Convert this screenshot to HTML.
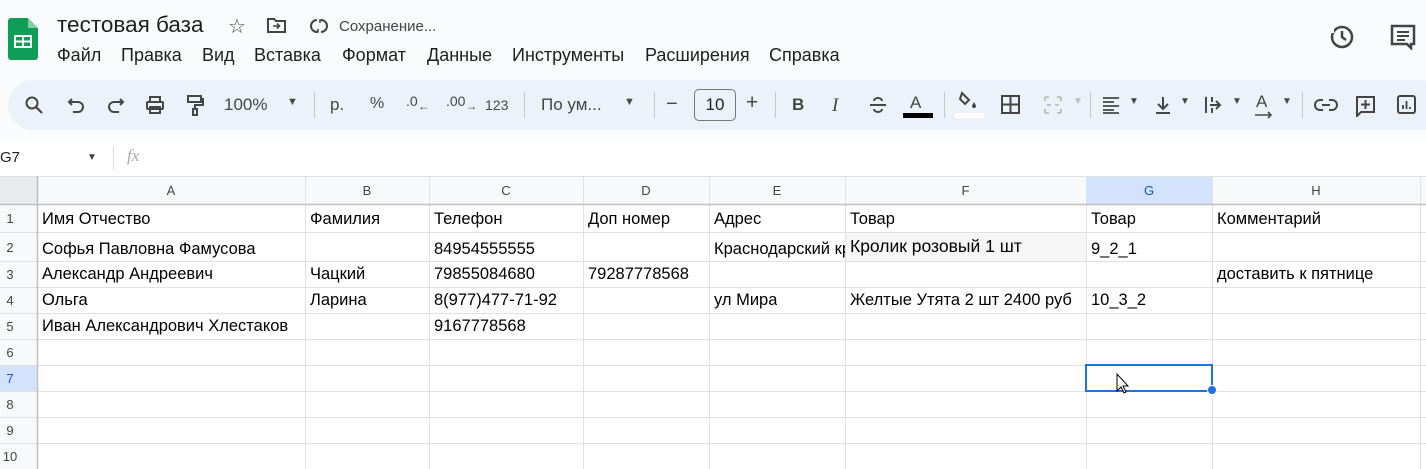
<!DOCTYPE html><html><head><meta charset="utf-8"><style>
body{margin:0;width:1426px;height:469px;overflow:hidden;background:#f9fbfd;font-family:"Liberation Sans",Arial,sans-serif;position:relative;color:#1f1f1f}
.a{position:absolute;white-space:nowrap}
.m{font-size:18px;top:45px;color:#1f1f1f}
.tb{position:absolute;left:8px;top:80px;width:1440px;height:50px;background:#edf2fa;border-radius:25px}
.ic{position:absolute;top:93px;color:#444746;font-size:17px}
.sep{position:absolute;top:92px;width:1px;height:26px;background:#c7c7c7}
.grid{position:absolute;left:0;top:176px;width:1426px;height:293px;background:#fff}
.c{position:absolute;font-size:16.5px;color:#000;white-space:nowrap;overflow:hidden}
.h{position:absolute;font-size:13px;color:#444;text-align:center}
svg.i path,svg.i rect,svg.i circle{fill:none;stroke:#444746;stroke-width:2}
</style></head><body>
<svg class="a" style="left:8px;top:18px" width="30" height="42" viewBox="0 0 30 42"><path d="M3 0h17l10 10v29a3 3 0 0 1-3 3H3a3 3 0 0 1-3-3V3a3 3 0 0 1 3-3z" fill="#0f9d58"/><path d="M20 0v10h10z" fill="#87ce9f"/><rect x="6" y="17" width="18" height="13" fill="#fff"/><rect x="8" y="19" width="6" height="3.5" fill="#0f9d58"/><rect x="16" y="19" width="6" height="3.5" fill="#0f9d58"/><rect x="8" y="24.5" width="6" height="3.5" fill="#0f9d58"/><rect x="16" y="24.5" width="6" height="3.5" fill="#0f9d58"/></svg>
<div class="a" style="left:57px;top:12px;font-size:22.5px">тестовая база</div>
<div class="a" style="left:228px;top:14px;font-size:20px;color:#444">☆</div>
<svg class="a" style="left:267px;top:17px" width="20" height="16"><path d="M1 2h6l2 2h9v11H1z" fill="none" stroke="#444" stroke-width="2"/><path d="M6 9h6m-2-2.5L12.5 9 10 11.5" stroke="#444" stroke-width="1.6" fill="none"/></svg>
<svg class="a" style="left:310px;top:17px" width="18" height="18"><path d="M7 3a6 6 0 0 0 0 12M11 3a6 6 0 0 1 0 12" fill="none" stroke="#444" stroke-width="2"/><path d="M5 15h3v-3M13 3h-3v3" fill="none" stroke="#444" stroke-width="1.6"/></svg>
<div class="a" style="left:339px;top:18px;font-size:15px;color:#444">Сохранение...</div>
<div class="a m" style="left:57px">Файл</div><div class="a m" style="left:121px">Правка</div><div class="a m" style="left:202px">Вид</div><div class="a m" style="left:254px">Вставка</div><div class="a m" style="left:342px">Формат</div><div class="a m" style="left:427px">Данные</div><div class="a m" style="left:512px">Инструменты</div><div class="a m" style="left:645px">Расширения</div><div class="a m" style="left:769px">Справка</div>
<svg class="a" style="left:1328px;top:24px" width="28" height="26"><circle cx="14" cy="13" r="10" fill="none" stroke="#444" stroke-width="2.5"/><path d="M14 7v6l4 3" stroke="#444" stroke-width="2.5" fill="none"/><rect x="0" y="2" width="6" height="7" fill="#f9fbfd"/></svg>
<svg class="a" style="left:1390px;top:24px" width="28" height="26"><path d="M2 2h22v18h-3v4l-4-4H2z" fill="none" stroke="#444" stroke-width="2.5"/><path d="M7 8h12M7 12h12M7 16h8" stroke="#444" stroke-width="2"/></svg>
<div class="tb"></div>
<svg class="a" style="left:24px;top:95px" width="20" height="20"><circle cx="8" cy="8" r="5.5" fill="none" stroke="#444" stroke-width="2"/><path d="M12 12l6 6" stroke="#444" stroke-width="2.2"/></svg>
<svg class="a i" style="left:67px;top:96px" width="20" height="20"><path d="M5 3L2 6l3 3M2 6h9a5 5 0 0 1 0 10H6"/></svg>
<svg class="a i" style="left:106px;top:96px" width="20" height="20"><path d="M14 3l3 3-3 3M17 6H8a5 5 0 0 0 0 10h5"/></svg>
<svg class="a i" style="left:145px;top:95px" width="20" height="20"><rect x="5" y="2" width="10" height="5"/><rect x="2" y="7" width="16" height="7" rx="1"/><rect x="5" y="12" width="10" height="6"/></svg>
<svg class="a i" style="left:186px;top:94px" width="18" height="22"><rect x="2" y="2" width="13" height="6"/><path d="M15 5h2v6H9v4"/><rect x="7" y="15" width="4" height="6"/></svg>
<div class="ic" style="left:224px;top:95px">100%</div><div class="ic" style="left:287px;top:96px;font-size:11px">▼</div>
<div class="sep" style="left:314px"></div>
<div class="ic" style="left:330px;top:95px">р.</div><div class="ic" style="left:370px;top:95px;font-size:16px">%</div><div class="ic" style="left:406px;top:93px;font-size:14px">.0<sub>←</sub></div><div class="ic" style="left:446px;top:93px;font-size:14px">.00<sub>→</sub></div><div class="ic" style="left:485px;top:97px;font-size:14px">123</div>
<div class="sep" style="left:524px"></div>
<div class="ic" style="left:541px;top:95px">По ум...</div><div class="ic" style="left:624px;top:96px;font-size:11px">▼</div>
<div class="sep" style="left:654px"></div>
<div class="ic" style="left:666px;top:93px;font-size:20px">−</div>
<div class="a" style="left:694px;top:89px;width:40px;height:30px;border:1px solid #747775;border-radius:5px;text-align:center;line-height:30px;font-size:17px;color:#1f1f1f">10</div>
<div class="ic" style="left:746px;top:91px;font-size:21px">+</div>
<div class="sep" style="left:775px"></div>
<div class="ic" style="left:792px;top:95px;font-weight:bold">B</div><div class="ic" style="left:832px;top:95px;font-style:italic;font-family:'Liberation Serif';font-size:19px">I</div>
<svg class="a i" style="left:868px;top:95px" width="20" height="20"><path d="M2 10h16M6 6a4 3 0 0 1 8 0M6 14a4 3 0 0 0 8 0"/></svg>
<div class="ic" style="left:910px;top:93px">A</div><div class="a" style="left:903px;top:113px;width:30px;height:5px;background:#000"></div>
<div class="sep" style="left:944px"></div>
<svg class="a" style="left:958px;top:91px" width="24" height="20"><path d="M4 2l7 7-4 4-5-5z" fill="none" stroke="#444" stroke-width="2"/><path d="M16 11c1 2 2 3 2 4a2 2 0 0 1-4 0c0-1 1-2 2-4z" fill="#444"/></svg><div class="a" style="left:955px;top:113px;width:29px;height:5px;background:#fff"></div>
<svg class="a" style="left:1001px;top:95px" width="20" height="20"><rect x="1" y="1" width="17" height="17" fill="none" stroke="#444" stroke-width="2"/><path d="M9.5 1v17M1 9.5h17" stroke="#444" stroke-width="2"/></svg>
<svg class="a" style="left:1043px;top:95px" width="20" height="20"><path d="M2 2h4M2 2v4M18 2h-4M18 2v4M2 18h4M2 18v-4M18 18h-4M18 18v-4M4 10h4M16 10h-4" fill="none" stroke="#bbb" stroke-width="1.8"/></svg><div class="ic" style="left:1073px;top:96px;font-size:10px;color:#bbb">▼</div>
<div class="sep" style="left:1090px"></div>
<svg class="a i" style="left:1101px;top:95px" width="20" height="20"><path d="M2 3h16M2 7h11M2 11h16M2 15h11M2 18h16" style="stroke-width:1.7"/></svg><div class="ic" style="left:1129px;top:96px;font-size:10px">▼</div>
<svg class="a i" style="left:1153px;top:95px" width="20" height="20"><path d="M10 2v12M5 9l5 5 5-5M3 18h14"/></svg><div class="ic" style="left:1180px;top:96px;font-size:10px">▼</div>
<svg class="a i" style="left:1204px;top:95px" width="20" height="20"><path d="M2 2v16M6 10h10M12 6l4 4-4 4M8 2v5M8 13v5"/></svg><div class="ic" style="left:1232px;top:96px;font-size:10px">▼</div>
<div class="ic" style="left:1256px;top:92px">A</div><svg class="a i" style="left:1254px;top:111px" width="20" height="8"><path d="M1 4h16M14 1l3 3-3 3" style="stroke-width:1.6"/></svg><div class="ic" style="left:1282px;top:96px;font-size:10px">▼</div>
<div class="sep" style="left:1302px"></div>
<svg class="a i" style="left:1314px;top:97px" width="24" height="16"><path d="M9 3H6a5 5 0 0 0 0 10h3M15 3h3a5 5 0 0 1 0 10h-3M8 8h8"/></svg>
<svg class="a" style="left:1355px;top:95px" width="22" height="22"><path d="M2 2h17v15H6l-4 4z" fill="none" stroke="#444" stroke-width="2"/><path d="M10.5 5v9M6 9.5h9" stroke="#444" stroke-width="2"/></svg>
<svg class="a" style="left:1397px;top:95px" width="20" height="20"><rect x="1" y="1" width="17" height="17" rx="2" fill="none" stroke="#444" stroke-width="2"/><path d="M6 14v-4M9.5 14V6M13 14v-2" stroke="#444" stroke-width="1.8"/></svg>
<div class="a" style="left:0;top:140px;width:1426px;height:36px;background:#fff"></div>
<div class="a" style="left:0;top:149px;font-size:15px">G7</div><div class="a" style="left:87px;top:152px;font-size:10px;color:#444">▼</div>
<div class="a" style="left:113px;top:146px;width:1px;height:24px;background:#ddd"></div>
<div class="a" style="left:127px;top:146px;font-size:17px;color:#aaa;font-style:italic;font-family:'Liberation Serif'">fx</div>
<div class="grid"></div>
<svg class="a" style="left:0;top:176px" width="1426" height="293">
<rect x="0" y="0" width="1426" height="29" fill="#f8f9fa"/><rect x="0" y="0" width="37" height="293" fill="#f8f9fa"/>
<rect x="1086" y="0" width="126" height="29" fill="#d3e3fd"/><rect x="0" y="189" width="37" height="26" fill="#d3e3fd"/>
<rect x="0" y="0" width="37" height="29" fill="#e8eaed"/>
<rect x="846" y="57" width="240" height="28" fill="#f6f6f6"/>
<g stroke="#e1e1e1" stroke-width="1">
<path d="M0 .5H1426M0 28.5H1426M0 56.5H1426M0 85.5H1426M0 111.5H1426M0 137.5H1426M0 163.5H1426M0 189.5H1426M0 215.5H1426M0 241.5H1426M0 267.5H1426"/>
<path d="M37.5 0V293M305.5 0V293M429.5 0V293M583.5 0V293M709.5 0V293M845.5 0V293M1086.5 0V293M1212.5 0V293M1420.5 0V293"/>
</g>
<path d="M0 28.5H1426M37.5 0V293" stroke="#c0c0c0" stroke-width="1.5"/>
<rect x="1086" y="189" width="126" height="26" fill="none" stroke="#1a73e8" stroke-width="2"/>
<circle cx="1212" cy="214" r="4.5" fill="#1a73e8" stroke="#fff" stroke-width="1"/>
<path d="M1117 198v17l4-4 3 6 2-1-3-6h5z" fill="#fff" stroke="#000" stroke-width="1"/>
</svg>
<div class="h" style="left:37px;top:183px;width:268px">A</div><div class="h" style="left:305px;top:183px;width:124px">B</div><div class="h" style="left:429px;top:183px;width:154px">C</div><div class="h" style="left:583px;top:183px;width:126px">D</div><div class="h" style="left:709px;top:183px;width:136px">E</div><div class="h" style="left:845px;top:183px;width:241px">F</div><div class="h" style="left:1086px;top:183px;width:126px;color:#0b57d0">G</div><div class="h" style="left:1212px;top:183px;width:208px">H</div>
<div class="h" style="left:0;top:211px;width:20px">1</div><div class="h" style="left:0;top:240px;width:20px">2</div><div class="h" style="left:0;top:267px;width:20px">3</div><div class="h" style="left:0;top:293px;width:20px">4</div><div class="h" style="left:0;top:319px;width:20px">5</div><div class="h" style="left:0;top:345px;width:20px">6</div><div class="h" style="left:0;top:371px;width:20px;color:#0b57d0">7</div><div class="h" style="left:0;top:397px;width:20px">8</div><div class="h" style="left:0;top:423px;width:20px">9</div><div class="h" style="left:0;top:449px;width:20px">10</div>
<div class="c" style="left:42px;top:210px">Имя Отчество</div><div class="c" style="left:310px;top:210px">Фамилия</div><div class="c" style="left:434px;top:210px">Телефон</div><div class="c" style="left:588px;top:210px">Доп номер</div><div class="c" style="left:714px;top:210px">Адрес</div><div class="c" style="left:850px;top:210px">Товар</div><div class="c" style="left:1091px;top:210px">Товар</div><div class="c" style="left:1217px;top:210px">Комментарий</div>
<div class="c" style="left:42px;top:240px">Софья Павловна Фамусова</div><div class="c" style="left:434px;top:240px">84954555555</div><div class="c" style="left:714px;top:240px;width:131px">Краснодарский край</div><div class="c" style="left:850px;top:236px;font-size:17.5px">Кролик розовый 1 шт</div><div class="c" style="left:1091px;top:240px">9_2_1</div>
<div class="c" style="left:42px;top:265px">Александр Андреевич</div><div class="c" style="left:310px;top:265px">Чацкий</div><div class="c" style="left:434px;top:265px">79855084680</div><div class="c" style="left:588px;top:265px">79287778568</div><div class="c" style="left:1217px;top:265px">доставить к пятнице</div>
<div class="c" style="left:42px;top:291px">Ольга</div><div class="c" style="left:310px;top:291px">Ларина</div><div class="c" style="left:434px;top:291px">8(977)477-71-92</div><div class="c" style="left:714px;top:291px">ул Мира</div><div class="c" style="left:850px;top:291px">Желтые Утята 2 шт 2400 руб</div><div class="c" style="left:1091px;top:291px">10_3_2</div>
<div class="c" style="left:42px;top:317px">Иван Александрович Хлестаков</div><div class="c" style="left:434px;top:317px">9167778568</div>
</body></html>
